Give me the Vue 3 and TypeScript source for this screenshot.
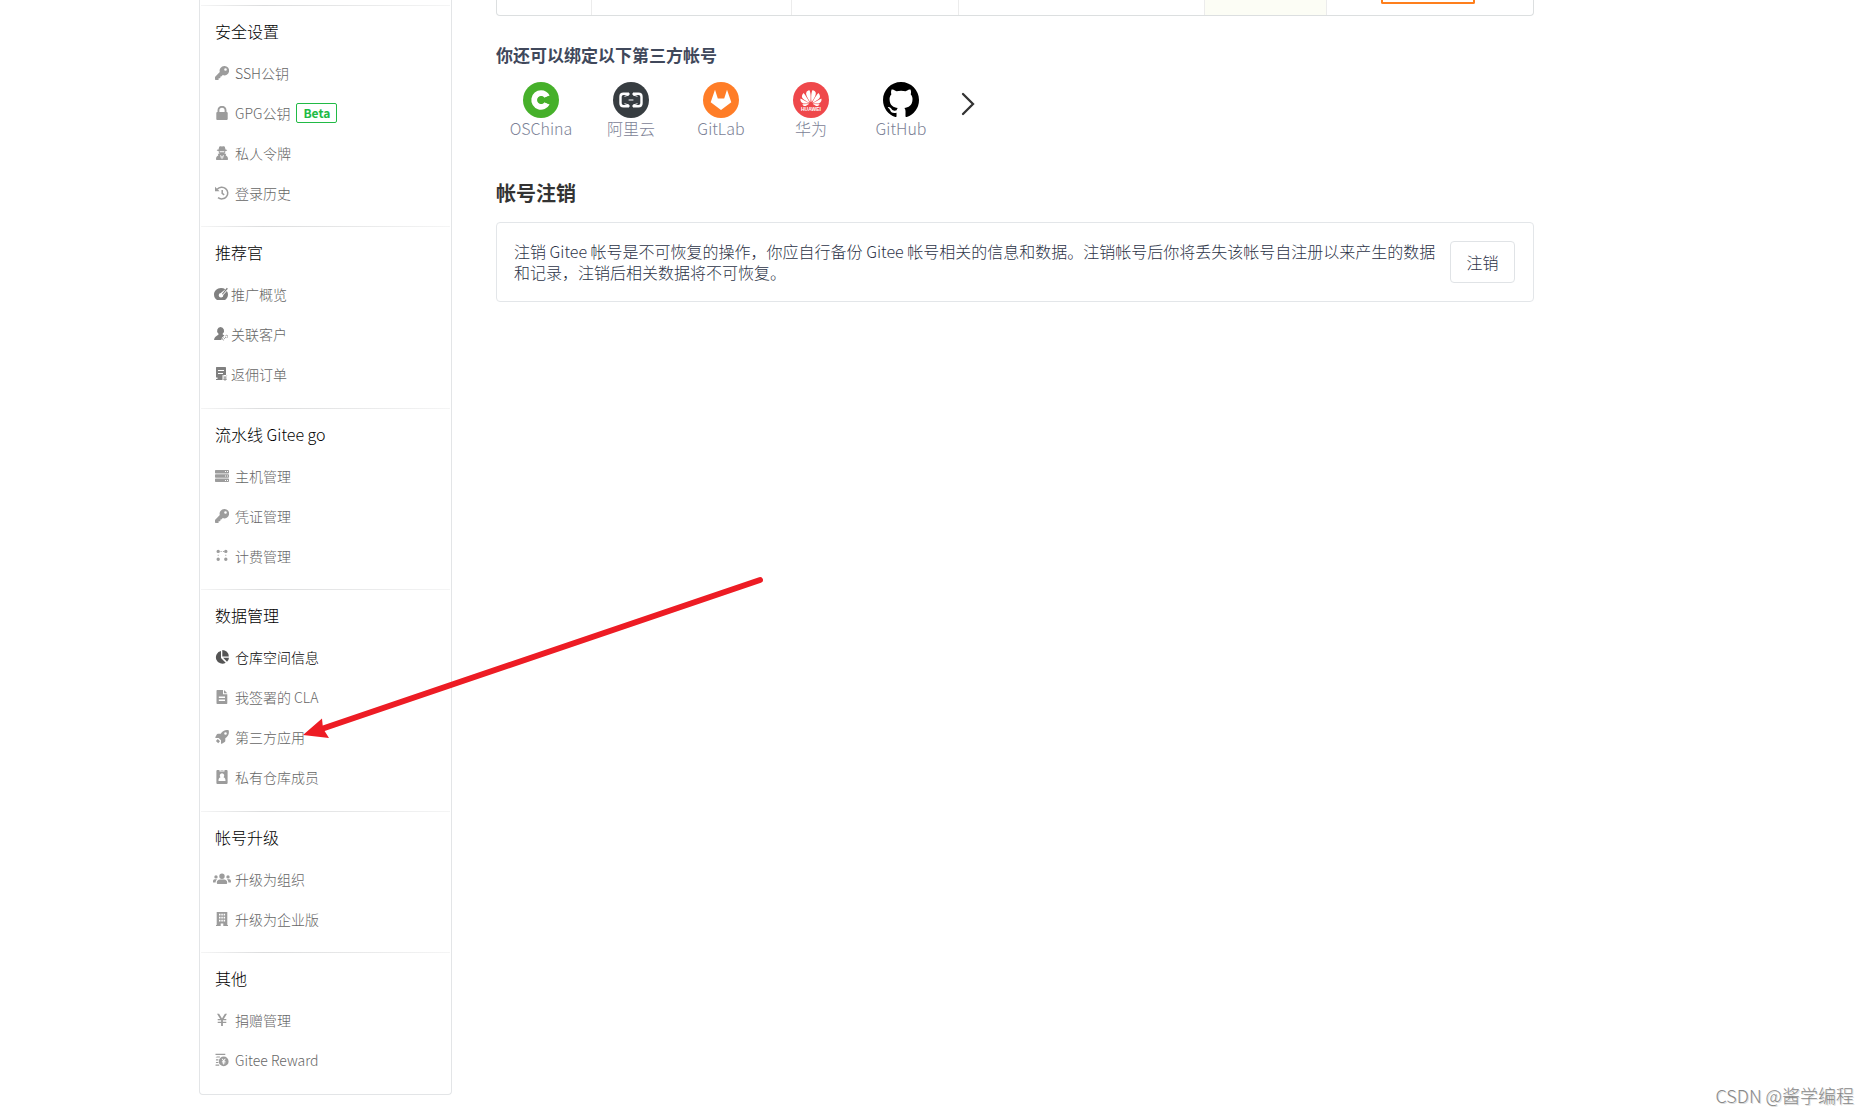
<script setup lang="ts">
interface Icon {
  fill?: string
  stroke?: string
  wide?: boolean
}
interface Item {
  label: string
  icon: string
  badge?: string
  active?: boolean
}
interface Group {
  title: string
  kind?: string
  items: Item[]
}

const icons: Record<string, Icon> = {
  key: {
    fill: 'M9.3 0a4.7 4.7 0 0 0-4.5 6.1L.2 10.700a.7.7 0 0 0-.2.500V13.300c0 .4.3.700.700.700H3c.4 0 .6-.3.6-.6V12.200h1.200c.4 0 .6-.3.6-.6V10.400h.9l1.500-1.300A4.700 4.700 0 1 0 9.300 0Zm1.200 2.200a1.300 1.300 0 1 1 0 2.600 1.300 1.300 0 0 1 0-2.600Z',
  },
  lock: {
    fill: 'M2.500 6V4.300a4.300 4.300 0 0 1 9 0V6h.300c.5 0 .900.400.900.900v6.200c0 .5-.4.900-.9.900H2.200a.9.900 0 0 1-.9-.9V6.900c0-.5.4-.9.9-.9Zm1.900 0h5.200V4.300a2.600 2.600 0 0 0-5.200 0Z',
  },
  spy: {
    fill: 'M4.200.8C4.600-.1 5.400.2 7 .500 8.600.2 9.400-.1 9.800.8l.7 2.600c1 .2 1.700.5 1.700.8 0 .4-1 .7-1.900.8v1.200a3 3 0 0 1-.9 1.600h1.900l-.7 1.500c1.500.7 2.400 2 2.400 3.600 0 .8-.4 1.200-1.200 1.200H2.200c-.8 0-1.200-.4-1.200-1.200 0-1.600.9-2.900 2.400-3.600L2.700 7.800h1.900a3 3 0 0 1-.9-1.600V5c-.9-.1-1.900-.4-1.900-.8 0-.3.700-.6 1.700-.8Zm.5 4.500v1h2l.3-.4.3.4h2v-1ZM5.200 9l1 4.500.6-2.700L6 9.300Zm3.600 0-.8.300-.8 1.500.6 2.700Z',
  },
  history: {
    stroke: 'M2.200 3.300A6 5.800 0 1 1 3 11.600M7.200 4v3.300l2 1.500',
    fill: 'M0 .8v4.500h4.600Z',
  },
  gauge: {
    fill: 'M7 1C3 1 0 4 0 7.600 0 10.400 1.500 12 3 13h8c1.700-1.200 3-3 3-5.400 0-1.300-.4-2.600-1.100-3.600L9.300 8a2.300 2.300 0 1 1-2.500-2l4.500-3.700A7.500 7.500 0 0 0 7 1Zm5.800-.3L7.900 6.900l.8.7 5.200-5.900Z',
  },
  client: {
    fill: 'M6.500 0a3.700 3.700 0 0 1 2.300 6.500c-.3.300-.3.700 0 1 .5.400 1.200.700 1.700 1.100L8 10.500 7.300 13H0C.4 9.800 2.300 9 4.300 7.700c.4-.3.300-.9 0-1.300A3.700 3.700 0 0 1 6.500 0Z',
    stroke: 'M9.500 10.300l-1 1a1.200 1.200 0 0 0 1.600 1.600M11.200 9.200l.8-.7a1.100 1.100 0 0 1 1.500 1.600l-1 1M10 12l2-2',
  },
  order: {
    fill: 'M2.500 0h8.800c.4 0 .7.3.7.700V8H8.500v5H2v-1h1.500V10.500H2V.7c0-.4.200-.7.500-.7ZM4 3v1h6V3Zm0 3v1h5V6Z',
    stroke: 'M9.300 8.500l1.700 2 1.700-2M11 10.500V14M9.200 11h3.600M9.200 12.500h3.600',
  },
  server: {
    fill: 'M.7 1h12.600c.4 0 .7.300.7.700v2c0 .4-.3.700-.7.700H.7A.7.700 0 0 1 0 3.700v-2C0 1.300.3 1 .7 1ZM10 2v1h1V2Zm2 0v1h1V2ZM.7 5.300h12.600c.4 0 .7.300.7.700v2c0 .4-.3.700-.7.700H.7A.7.700 0 0 1 0 8V6c0-.4.3-.7.7-.7Zm9.300 1.200v1h1v-1Zm2 0v1h1v-1ZM.7 9.600h12.600c.4 0 .7.300.7.700v2c0 .4-.3.700-.7.700H.7a.7.700 0 0 1-.7-.7v-2c0-.4.3-.7.7-.7ZM10 11v1h1v-1Zm2 0v1h1v-1Z',
  },
  dots: {
    fill: 'M3.200.7a1.700 1.700 0 1 1 0 3.400 1.700 1.700 0 0 1 0-3.400Zm7.600 0a1.700 1.700 0 1 1 0 3.400 1.700 1.700 0 0 1 0-3.400ZM3.200 8.500a1.700 1.700 0 1 1 0 3.400 1.700 1.700 0 0 1 0-3.400Zm7.600 0a1.700 1.700 0 1 1 0 3.400 1.700 1.700 0 0 1 0-3.400ZM5.600 2h1v1h-1Zm2.300 0h1v1h-1ZM2.700 5.700h1v1h-1Zm7.600 0h1v1h-1Z',
  },
  pie: {
    fill: 'M6 1v7l4.700 4.700A6.400 6.400 0 1 1 6 1Zm1.300-1A6.500 6.500 0 0 1 13.800 6.400H7.300Zm.8 7.700H14a6.400 6.400 0 0 1-2 4.100Z',
  },
  doc: {
    fill: 'M2.200 0H8v4.200h4.300V13.300c0 .4-.3.700-.7.700H2.200a.7.700 0 0 1-.7-.7V.7c0-.4.3-.7.7-.7ZM9 0l3.300 3.300H9ZM3.800 6.500V8H10V6.500Zm0 3V11H10V9.500Z',
  },
  rocket: {
    fill: 'M13.700.3C10.200-.4 7.900.700 5.700 3.700H2.900c-.4 0-.8.200-1 .600L.300 7.200c-.2.400 0 .8.500.8h2.900l2.300 2.300v2.900c0 .500.500.700.900.500l2.800-1.600c.4-.2.600-.6.600-1V8.300c3-2.200 4.100-4.500 3.400-8Zm-3.200 1.900a1.300 1.300 0 1 1 0 2.600 1.300 1.300 0 0 1 0-2.600ZM2.800 9 .9 10.900l2.300 2.300L5 11.300Z',
  },
  badge: {
    fill: 'M2.300 0h2.200v1.500h5V0h2.200c.5 0 .9.4.9.9v12.200c0 .5-.4.9-.9.900H2.300a.9.900 0 0 1-.9-.9V.9c0-.5.4-.9.9-.9ZM7 3.300a2.300 2.300 0 0 0-1.500 4C4 7.800 3.500 9 3.500 11h7c0-2-.5-3.200-2-3.700A2.300 2.300 0 0 0 7 3.300ZM5.500 0h3v.6h-3Z',
  },
  users: {
    wide: true,
    fill: 'M9 1.500a2.700 2.700 0 1 1 0 5.400 2.700 2.700 0 0 1 0-5.400ZM3 3.200a1.700 1.700 0 1 1 0 3.400 1.700 1.700 0 0 1 0-3.400Zm12 0a1.700 1.700 0 1 1 0 3.400 1.700 1.700 0 0 1 0-3.400ZM7 7.600h4c2 0 3.200 1.300 3.200 3.100 0 .8-.4 1.300-1.200 1.300H5c-.8 0-1.200-.5-1.200-1.300C3.800 8.900 5 7.600 7 7.600ZM1.600 7.300h2.500C3.200 8.100 2.700 9 2.600 10.500H.5c-.3 0-.5-.2-.5-.6 0-1.600.4-2.600 1.600-2.600Zm12.300 0h2.500C17.600 7.300 18 8.300 18 9.900c0 .4-.2.600-.5.600h-2.100c-.1-1.500-.6-2.400-1.500-3.200Z',
  },
  building: {
    fill: 'M1.700 0h10.600v13H13v1H8.300v-2.500H5.700V14H1v-1h.7ZM4 1.800v1.700h1.500V1.800Zm2.300 0v1.700h1.500V1.800Zm2.300 0v1.700h1.500V1.800ZM4 4.800v1.700h1.500V4.800Zm2.300 0v1.700h1.500V4.800Zm2.300 0v1.700h1.500V4.800ZM4 7.800v1.700h1.500V7.800Zm2.300 0v1.700h1.500V7.800Zm2.300 0v1.700h1.500V7.800Z',
  },
  yen: {
    fill: 'M2 .7h2.100L7 5.400 9.900.700H12L8.800 6h2.500v1.300H7.900v1.400h3.400V10H7.900v3H6.100v-3H2.700V8.700h3.400V7.300H2.700V6h2.500Z',
  },
  reward: {
    fill: 'M.5.700h9.800V2H.5Zm1.400 2.700h3v1.200H.5Zm-.9 2.800h2.400v1.200H.9Zm0 2.700h2.400v1.200H.9Zm-.4 2.700h3.600v1.200H.5ZM8.700 3.500a4.900 4.900 0 1 1 0 9.800 4.900 4.900 0 0 1 0-9.800ZM6.600 5.700l1.500 2.200H6.900v.8h1.300v.7H6.900v.8h1.300v1.300h1v-1.300h1.300v-.8H9.200v-.7h1.300v-.8H9.300l1.500-2.200H9.700l-1 1.600-1-1.600Z',
  },
}

const groups: Group[] = [
  {
    title: '安全设置',
    items: [
      { label: 'SSH公钥', icon: 'key' },
      { label: 'GPG公钥', icon: 'lock', badge: 'Beta' },
      { label: '私人令牌', icon: 'spy' },
      { label: '登录历史', icon: 'history' },
    ],
  },
  {
    title: '推荐官',
    kind: 'promo',
    items: [
      { label: '推广概览', icon: 'gauge' },
      { label: '关联客户', icon: 'client' },
      { label: '返佣订单', icon: 'order' },
    ],
  },
  {
    title: '流水线 Gitee go',
    items: [
      { label: '主机管理', icon: 'server' },
      { label: '凭证管理', icon: 'key' },
      { label: '计费管理', icon: 'dots' },
    ],
  },
  {
    title: '数据管理',
    kind: 'data',
    items: [
      { label: '仓库空间信息', icon: 'pie', active: true },
      { label: '我签署的 CLA', icon: 'doc' },
      { label: '第三方应用', icon: 'rocket' },
      { label: '私有仓库成员', icon: 'badge' },
    ],
  },
  {
    title: '帐号升级',
    items: [
      { label: '升级为组织', icon: 'users' },
      { label: '升级为企业版', icon: 'building' },
    ],
  },
  {
    title: '其他',
    items: [
      { label: '捐赠管理', icon: 'yen' },
      { label: 'Gitee Reward', icon: 'reward' },
    ],
  },
]
</script>

<template>
  <div class="page">
    <nav class="side">
      <section v-for="g in groups" :key="g.title" class="group" :class="g.kind">
        <h2 class="group-title">{{ g.title }}</h2>
        <ul class="list">
          <li v-for="it in g.items" :key="it.label">
            <a href="#" class="item" :class="{ active: it.active }">
              <svg
                class="icon"
                :class="{ wide: icons[it.icon].wide }"
                :viewBox="icons[it.icon].wide ? '0 0 18 14' : '0 0 14 14'"
                aria-hidden="true"
              >
                <path v-if="icons[it.icon].fill" :d="icons[it.icon].fill" fill="currentColor" fill-rule="evenodd" />
                <path
                  v-if="icons[it.icon].stroke"
                  :d="icons[it.icon].stroke"
                  fill="none"
                  stroke="currentColor"
                  :stroke-width="it.icon === 'history' ? 1.5 : 0.7"
                />
              </svg>
              <span>{{ it.label }}</span>
              <span v-if="it.badge" class="beta">{{ it.badge }}</span>
            </a>
          </li>
        </ul>
      </section>
    </nav>

    <main class="main">
      <table class="bindings">
        <colgroup>
          <col class="c1" /><col class="c2" /><col class="c3" /><col class="c4" /><col class="c5" /><col />
        </colgroup>
        <tbody>
          <tr>
            <td></td>
            <td></td>
            <td></td>
            <td></td>
            <td class="marked"></td>
            <td class="action"><button type="button" class="unbind" aria-label="解绑"></button></td>
          </tr>
        </tbody>
      </table>

      <h3 class="bind-title">你还可以绑定以下第三方帐号</h3>
      <div class="providers">
        <a href="#" class="provider">
          <svg viewBox="0 0 36 36" aria-hidden="true">
            <circle cx="18" cy="18" r="18" fill="#46b02a" />
            <path
              d="M18 8.300c3.900 0 7 2 8.600 5.200l-5.200 2.200a4 4 0 1 0 0 4.600l5.200 2.200A9.700 9.700 0 1 1 18 8.300Z"
              fill="#fff"
            />
            <path d="M14.500 18a3.700 3.700 0 0 1 6.800-2l4-1.700v7.400l-4-1.700a3.700 3.700 0 0 1-6.800-2Z" fill="#46b02a" />
          </svg>
          <span>OSChina</span>
        </a>
        <a href="#" class="provider">
          <svg viewBox="0 0 36 36" aria-hidden="true">
            <circle cx="18" cy="18" r="18" fill="#373d41" />
            <g fill="none" stroke="#fff" stroke-width="2.400">
              <path d="M16 11.700h-5.500q-3 0-3 3v6.600q0 3 3 3H16" />
              <path d="M20 11.700h5.500q3 0 3 3v6.600q0 3-3 3H20" />
            </g>
            <path d="M11.500 14.300 16 13v-2M11.500 21.700 16 23v2M24.500 14.300 20 13v-2M24.500 21.700 20 23v2" fill="none" stroke="#fff" stroke-width="1" />
            <path d="M15.600 17.200h4.800v1.600h-4.800Z" fill="#b5b7b9" />
          </svg>
          <span>阿里云</span>
        </a>
        <a href="#" class="provider">
          <svg viewBox="0 0 36 36" aria-hidden="true">
            <circle cx="18" cy="18" r="18" fill="#ff7d27" />
            <path d="m12 7.800 2.800 8.700h6.400L24 7.800l4.300 12.500L18 28 7.700 20.300Z" fill="#fff" />
          </svg>
          <span>GitLab</span>
        </a>
        <a href="#" class="provider">
          <svg viewBox="0 0 36 36" aria-hidden="true">
            <circle cx="18" cy="18" r="18" fill="#ef484b" />
            <path
              transform="translate(7.400 5.600) scale(0.880)"
              fill="#fff"
              d="M3.670 6.140S1.820 7.910 1.720 9.780v.35c.08 1.510 1.220 2.400 1.220 2.400 1.830 1.790 6.260 4.040 7.300 4.550 0 0 .06.03.1-.01l.02-.04v-.04C7.520 10.800 3.670 6.140 3.670 6.140zM9.650 18.600c-.02-.08-.1-.08-.1-.08l-7.380.26c.8 1.430 2.150 2.530 3.560 2.200.96-.25 3.160-1.780 3.880-2.300.06-.05.04-.09.04-.09zm.08-.78C6.490 15.630.21 12.280.21 12.280c-.15.46-.2.9-.21 1.300v.07c0 1.070.4 1.820.4 1.820.8 1.690 2.340 2.200 2.340 2.200.7.3 1.400.31 1.400.31.12.02 4.400 0 5.540 0 .05 0 .08-.05.08-.05v-.06c0-.03-.03-.05-.03-.05zM9.060 3.190a3.420 3.420 0 0 0-2.570 3.150v.41c.03.6.16 1.050.16 1.050.66 2.900 3.860 7.650 4.550 8.650.05.05.1.03.1.03a.1.1 0 0 0 .06-.1c1.060-10.600-1.110-13.420-1.110-13.420-.32.02-1.190.23-1.190.23zm8.299 2.270s-.49-1.800-2.440-2.280c0 0-.57-.14-1.170-.22 0 0-2.180 2.810-1.120 13.430.01.07.06.08.06.08.07.03.1-.03.1-.03.72-1.030 3.900-5.760 4.550-8.640 0 0 .36-1.400.02-2.340zm-2.920 13.070s-.07 0-.09.05c0 0-.01.07.03.1.7.51 2.850 2 3.880 2.300 0 0 .16.05.43.06h.14c.69-.02 1.900-.37 3-2.260l-7.400-.25zm7.830-8.410c.14-2.060-1.940-3.970-1.940-3.980 0 0-3.850 4.660-6.670 10.800 0 0-.03.08.02.13l.04.01h.06c1.060-.53 5.460-2.770 7.280-4.540 0 0 1.150-.93 1.210-2.420zm1.520 2.140s-6.280 3.370-9.520 5.550c0 0-.05.04-.03.11 0 0 .03.06.07.06 1.160 0 5.560 0 5.670-.02 0 0 .57-.02 1.270-.29 0 0 1.560-.5 2.370-2.270 0 0 .73-1.450.17-3.140z"
            />
            <text x="18" y="29" text-anchor="middle" class="mark">HUAWEI</text>
          </svg>
          <span>华为</span>
        </a>
        <a href="#" class="provider">
          <svg viewBox="0 0 16 16" aria-hidden="true">
            <path
              fill="#000"
              d="M8 0C3.580 0 0 3.580 0 8c0 3.540 2.290 6.530 5.470 7.590.4.070.55-.17.55-.38 0-.19-.01-.82-.01-1.490-2.010.37-2.530-.49-2.690-.94-.09-.23-.48-.94-.82-1.130-.28-.15-.68-.52-.01-.53.63-.01 1.080.58 1.230.82.72 1.210 1.870.87 2.330.66.07-.52.28-.87.51-1.070-1.780-.2-3.640-.89-3.640-3.950 0-.87.31-1.590.82-2.150-.08-.2-.36-1.020.08-2.120 0 0 .67-.21 2.200.82.64-.18 1.320-.27 2-.27.68 0 1.360.09 2 .27 1.530-1.040 2.200-.82 2.200-.82.44 1.100.16 1.920.08 2.120.51.56.82 1.270.82 2.150 0 3.070-1.870 3.750-3.650 3.950.29.25.54.73.54 1.480 0 1.070-.01 1.930-.01 2.200 0 .21.15.46.55.38A8.013 8.013 0 0 0 16 8c0-4.420-3.580-8-8-8z"
            />
          </svg>
          <span>GitHub</span>
        </a>
        <button type="button" class="next" aria-label="更多">
          <svg viewBox="0 0 14 24" aria-hidden="true">
            <path d="M2 2 12 12 2 22" fill="none" stroke="#333" stroke-width="2.300" stroke-linecap="round" />
          </svg>
        </button>
      </div>

      <h2 class="cancel-title">帐号注销</h2>
      <div class="cancel">
        <p>注销 Gitee 帐号是不可恢复的操作，你应自行备份 Gitee 帐号相关的信息和数据。注销帐号后你将丢失该帐号自注册以来产生的数据和记录，注销后相关数据将不可恢复。</p>
        <button type="button">注销</button>
      </div>
    </main>

    <svg class="arrow" viewBox="0 0 464 164" aria-hidden="true">
      <path d="M460 4 20 153.500" stroke="#ed1c24" stroke-width="6" stroke-linecap="round" />
      <path d="M3 159 22 142.500 23 152.500 29 162Z" fill="#ed1c24" />
    </svg>
    <div class="watermark">CSDN @酱学编程</div>
  </div>
</template>

<style>
body {
  margin: 0;
  background: #fff;
}
</style>

<style scoped>
.page {
  position: relative;
  display: flex;
  align-items: flex-start;
  gap: 44px;
  padding: 0 336px 20px 199px;
  font-family: "Noto Sans CJK SC", "Noto Sans", sans-serif;
  font-size: 16px;
  color: #40485b;
}
.side {
  box-sizing: border-box;
  flex: 0 0 253px;
  padding-top: 5px;
  border: 1px solid #e3e5e7;
  border-top: 0;
  border-radius: 0 0 4px 4px;
}
.group {
  padding: 14px 0 13px 15px;
  background: linear-gradient(to right, rgba(220, 221, 222, 0.3), #dcddde 25%, rgba(220, 221, 222, 0.3)) 1px 0 / 249px 1px no-repeat;
}
.group.promo,
.group.data,
.group:last-child {
  padding-bottom: 14px;
}
.group-title {
  margin: 0 0 10px;
  font-size: 16px;
  line-height: 24px;
  font-weight: 300;
  color: #000;
}
.list {
  margin: 0;
  padding: 0;
  list-style: none;
}
.item {
  display: flex;
  align-items: center;
  height: 40px;
  font-size: 14px;
  font-weight: 300;
  color: #666;
  text-decoration: none;
}
.icon {
  width: 14px;
  height: 14px;
  margin-right: 6px;
  color: #9c9c9c;
}
.icon.wide {
  width: 18px;
  margin: 0 4px 0 -2px;
}
.promo .icon {
  margin: 0 3px 0 -1px;
  color: #808080;
}
.item.active {
  color: #000;
}
.active .icon {
  color: #555;
}
.beta {
  box-sizing: border-box;
  height: 20px;
  margin-left: 6px;
  padding: 0 6px;
  border: 1px solid #21ba45;
  border-radius: 2px;
  font-size: 12px;
  line-height: 18px;
  font-weight: 700;
  color: #21ba45;
}
.main {
  flex: 1;
  min-width: 0;
}
.bindings {
  width: 100%;
  table-layout: fixed;
  border: 1px solid #dcdfe0;
  border-top: 0;
  border-radius: 0 0 4px 4px;
  border-spacing: 0;
}
.bindings td {
  height: 15px;
  padding: 0;
  border-left: 1px solid #ececec;
  vertical-align: top;
}
.bindings td:first-child {
  border-left: 0;
}
.bindings .marked {
  background: #fcfdf5;
}
.bindings .action {
  padding-right: 4px;
}
.c1 {
  width: 94px;
}
.c2 {
  width: 200px;
}
.c3 {
  width: 167px;
}
.c4 {
  width: 246px;
}
.c5 {
  width: 122px;
}
.unbind {
  display: block;
  box-sizing: border-box;
  width: 94px;
  height: 4px;
  margin: 0 auto;
  padding: 0;
  border: 2px solid #fe7f1d;
  border-top: 0;
  border-radius: 0 0 2px 2px;
  background: #fff;
}
.bind-title {
  margin: 27px 0 15px;
  font-size: 17px;
  line-height: 24px;
  font-weight: 700;
}
.providers {
  display: flex;
}
.provider {
  display: flex;
  flex-direction: column;
  align-items: center;
  width: 90px;
  font-weight: 300;
  line-height: 20px;
  color: #7c8296;
  text-decoration: none;
}
.provider svg {
  width: 36px;
  height: 36px;
}
.mark {
  font: 700 5px "Liberation Sans", sans-serif;
  fill: #fff;
}
.next {
  align-self: flex-start;
  margin: 10px 0 0 15px;
  padding: 0;
  border: 0;
  background: none;
}
.next svg {
  display: block;
  width: 14px;
  height: 24px;
}
.cancel-title {
  margin: 40px 0 14px;
  font-size: 20px;
  line-height: 30px;
  font-weight: 700;
  color: #333;
}
.cancel {
  display: flex;
  align-items: center;
  gap: 8px;
  padding: 18px 18px 18px 17px;
  border: 1px solid #e3e6e9;
  border-radius: 4px;
}
.cancel p {
  flex: 1;
  margin: 0;
  font-weight: 300;
  line-height: 21px;
  color: #2c3347;
}
.cancel button {
  width: 65px;
  height: 42px;
  padding: 0;
  border: 1px solid #e0e3e6;
  border-radius: 4px;
  background: #fff;
  color: #2c3347;
  font: 300 16px "Noto Sans CJK SC", sans-serif;
}
.arrow {
  position: absolute;
  top: 576px;
  left: 300px;
  width: 464px;
  height: 164px;
  fill: none;
  pointer-events: none;
}
.watermark {
  position: absolute;
  right: 16px;
  bottom: 7px;
  font-size: 18px;
  line-height: 26px;
  font-weight: 300;
  color: #888;
  text-shadow: 1px 1px 0 #ddd;
}
</style>
